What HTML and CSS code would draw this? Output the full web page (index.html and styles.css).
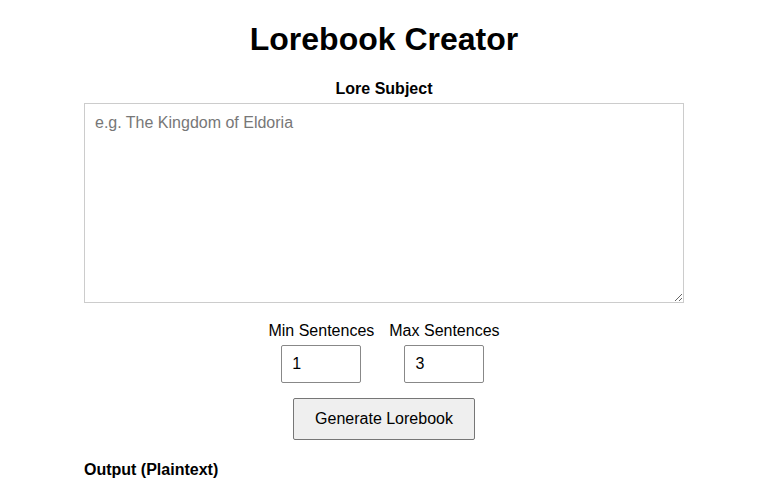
FILE: index.html
```html
<!DOCTYPE html>
<html>
<head>
<meta charset="utf-8">
<title>Lorebook Creator</title>
<link rel="stylesheet" href="styles.css">
</head>
<body>
<div class="container">
  <h1 class="title">Lorebook Creator</h1>
  <label class="field-label" for="subject">Lore Subject</label>
  <textarea id="subject" class="subject" placeholder="e.g. The Kingdom of Eldoria"></textarea>
  <div class="sentences">
    <div class="group">
      <label for="min">Min Sentences</label>
      <input id="min" class="num" type="number" value="1">
    </div>
    <div class="group">
      <label for="max">Max Sentences</label>
      <input id="max" class="num" type="number" value="3">
    </div>
  </div>
  <div class="actions">
    <button class="generate">Generate Lorebook</button>
  </div>
  <div class="output-label">Output (Plaintext)</div>
</div>
</body>
</html>
```
FILE: styles.css
```css
html, body {
  margin: 0;
  padding: 0;
  background: #fff;
}
body {
  font-family: "Liberation Sans", Arial, sans-serif;
  font-size: 16px;
  color: #000;
}
.container {
  width: 600px;
  margin: 0 auto;
  padding-top: 21px;
  display: flex;
  flex-direction: column;
}
.title {
  margin: 0;
  font-size: 32px;
  font-weight: bold;
  text-align: center;
  line-height: 37px;
}
.field-label {
  display: block;
  margin-top: 22px;
  font-weight: bold;
  text-align: center;
  line-height: 18px;
}
.subject {
  margin-top: 5px;
  box-sizing: border-box;
  width: 600px;
  height: 200px;
  padding: 10px;
  border: 1px solid #ccc;
  font-family: "Liberation Sans", Arial, sans-serif;
  font-size: 16px;
  resize: vertical;
}
.subject::placeholder {
  color: #777;
}
.sentences {
  display: flex;
  justify-content: center;
  gap: 15px;
  margin-top: 19px;
}
.group {
  display: flex;
  flex-direction: column;
  align-items: center;
}
.group label {
  line-height: 18px;
}
.num {
  margin-top: 5px;
  box-sizing: border-box;
  width: 80px;
  height: 38px;
  padding: 0 10px;
  border: 1px solid #888;
  border-radius: 2px;
  font-family: "Liberation Sans", Arial, sans-serif;
  font-size: 16px;
  -moz-appearance: textfield;
}
.num::-webkit-inner-spin-button,
.num::-webkit-outer-spin-button {
  -webkit-appearance: none;
  margin: 0;
}
.actions {
  display: flex;
  justify-content: center;
  margin-top: 15px;
}
.generate {
  box-sizing: border-box;
  width: 182px;
  height: 42px;
  padding: 0 20px;
  background: #efefef;
  border: 1px solid #767676;
  border-radius: 2px;
  font-family: "Liberation Sans", Arial, sans-serif;
  font-size: 16px;
  color: #000;
}
.output-label {
  margin-top: 21px;
  font-weight: bold;
  line-height: 18px;
}
```
